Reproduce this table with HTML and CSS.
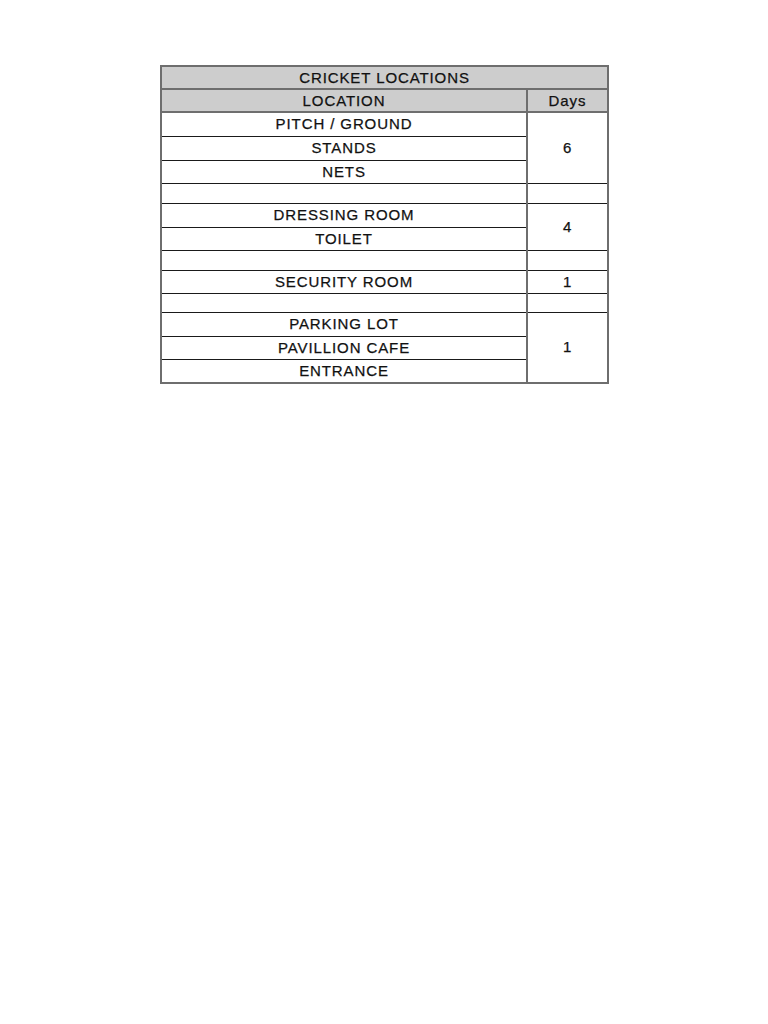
FILE: index.html
```html
<!DOCTYPE html>
<html>
<head>
<meta charset="utf-8">
<link rel="stylesheet" href="styles.css">
</head>
<body>
<div class="page">
<table class="sheet">
  <colgroup><col class="c-loc"><col class="c-days"></colgroup>
  <tr class="r23 head"><td colspan="2" class="title">CRICKET LOCATIONS</td></tr>
  <tr class="r23 head"><td class="hdr-loc">LOCATION</td><td class="hdr-days">Days</td></tr>
  <tr class="r24"><td>PITCH / GROUND</td><td rowspan="3" class="days">6</td></tr>
  <tr class="r24"><td>STANDS</td></tr>
  <tr class="r23"><td>NETS</td></tr>
  <tr class="r20 blank"><td></td><td class="days"></td></tr>
  <tr class="r24"><td>DRESSING ROOM</td><td rowspan="2" class="days">4</td></tr>
  <tr class="r23"><td>TOILET</td></tr>
  <tr class="r20 blank"><td></td><td class="days"></td></tr>
  <tr class="r23"><td>SECURITY ROOM</td><td class="days">1</td></tr>
  <tr class="r19 blank"><td></td><td class="days"></td></tr>
  <tr class="r24"><td>PARKING LOT</td><td rowspan="3" class="days">1</td></tr>
  <tr class="r23"><td>PAVILLION CAFE</td></tr>
  <tr class="r24"><td>ENTRANCE</td></tr>
</table>
</div>
</body>
</html>
```
FILE: styles.css
```css
html, body {
  margin: 0;
  padding: 0;
  background: #ffffff;
}
.page {
  padding: 65px 0 0 160px;
}
.sheet {
  border-collapse: collapse;
  width: 447px;
  table-layout: fixed;
  font-family: "Liberation Sans", Arial, sans-serif;
  font-size: 15px;
  letter-spacing: 0.9px;
  color: #111;
  border: 2px solid #6e6e6e;
}
.c-loc { width: 366px; }
.c-days { width: 81px; }
.sheet td {
  border: 1px solid #1a1a1a;
  text-align: center;
  padding: 0;
  line-height: 16px;
  -webkit-text-stroke: 0.25px #111;
}
.sheet td.days,
.sheet td.hdr-days {
  border-left: 2px solid #6e6e6e;
}
.head td {
  background: #cdcdcd;
  border-bottom: 2px solid #6e6e6e;
}
.r24 { height: 24px; }
.r23 { height: 23px; }
.r20 { height: 20px; }
.r19 { height: 19px; }
```
